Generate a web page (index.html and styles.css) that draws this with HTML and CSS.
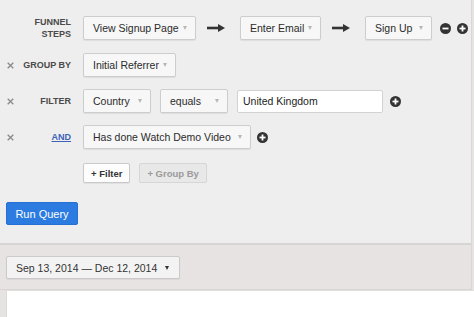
FILE: index.html
```html
<!DOCTYPE html>
<html>
<head>
<meta charset="utf-8">
<link rel="stylesheet" href="styles.css">
</head>
<body>
<div class="page">
  <section class="builder">
    <div class="row row-funnel">
      <div class="label"><span class="label-text">FUNNEL<br>STEPS</span></div>
      <div class="controls">
        <button class="select w-view">View Signup Page<span class="caret"></span></button>
        <svg class="arrow" width="18" height="8" viewBox="0 0 18 8"><rect x="0" y="2.7" width="12" height="2.6" fill="#333"/><path d="M11 0 L18 4 L11 8 Z" fill="#333"/></svg>
        <button class="select w-email">Enter Email<span class="caret"></span></button>
        <svg class="arrow" width="18" height="8" viewBox="0 0 18 8"><rect x="0" y="2.7" width="12" height="2.6" fill="#333"/><path d="M11 0 L18 4 L11 8 Z" fill="#333"/></svg>
        <button class="select w-signup">Sign Up<span class="caret"></span></button>
        <svg class="circle minus-btn" width="11" height="11" viewBox="0 0 11 11"><circle cx="5.5" cy="5.5" r="5.5" fill="#333"/><rect x="2.5" y="4.6" width="6" height="1.8" fill="#fff"/></svg>
        <svg class="circle plus-pair" width="11" height="11" viewBox="0 0 11 11"><circle cx="5.5" cy="5.5" r="5.5" fill="#333"/><rect x="2.5" y="4.6" width="6" height="1.8" fill="#fff"/><rect x="4.6" y="2.5" width="1.8" height="6" fill="#fff"/></svg>
      </div>
    </div>

    <div class="row">
      <div class="label"><svg class="remove" width="7" height="7" viewBox="0 0 7 7"><path d="M0.7 0.7 L6.3 6.3 M6.3 0.7 L0.7 6.3" stroke="#8a8a8a" stroke-width="1.3"/></svg><span class="label-text">GROUP BY</span></div>
      <div class="controls">
        <button class="select w-referrer">Initial Referrer<span class="caret"></span></button>
      </div>
    </div>

    <div class="row">
      <div class="label"><svg class="remove" width="7" height="7" viewBox="0 0 7 7"><path d="M0.7 0.7 L6.3 6.3 M6.3 0.7 L0.7 6.3" stroke="#8a8a8a" stroke-width="1.3"/></svg><span class="label-text">FILTER</span></div>
      <div class="controls gap">
        <button class="select w-68">Country<span class="caret"></span></button>
        <button class="select w-68">equals<span class="caret"></span></button>
        <div class="text-input">United Kingdom</div>
        <svg class="circle plus-after" width="11" height="11" viewBox="0 0 11 11"><circle cx="5.5" cy="5.5" r="5.5" fill="#333"/><rect x="2.5" y="4.6" width="6" height="1.8" fill="#fff"/><rect x="4.6" y="2.5" width="1.8" height="6" fill="#fff"/></svg>
      </div>
    </div>

    <div class="row">
      <div class="label"><svg class="remove" width="7" height="7" viewBox="0 0 7 7"><path d="M0.7 0.7 L6.3 6.3 M6.3 0.7 L0.7 6.3" stroke="#8a8a8a" stroke-width="1.3"/></svg><a class="label-text and-link" href="#">AND</a></div>
      <div class="controls">
        <button class="select w-demo">Has done Watch Demo Video<span class="caret"></span></button>
        <svg class="circle plus-after" width="11" height="11" viewBox="0 0 11 11"><circle cx="5.5" cy="5.5" r="5.5" fill="#333"/><rect x="2.5" y="4.6" width="6" height="1.8" fill="#fff"/><rect x="4.6" y="2.5" width="1.8" height="6" fill="#fff"/></svg>
      </div>
    </div>

    <div class="row">
      <div class="label"></div>
      <div class="controls gap">
        <button class="small-btn">+ Filter</button>
        <button class="small-btn disabled">+ Group By</button>
      </div>
    </div>

    <div class="run-wrap">
      <button class="run-btn">Run Query</button>
    </div>
  </section>

  <section class="toolbar">
    <button class="date-btn">Sep 13, 2014 — Dec 12, 2014<span class="caret dark"></span></button>
  </section>

  <section class="results"></section>
</div>
</body>
</html>
```

FILE: styles.css
```css
* { box-sizing: border-box; }
html, body { margin: 0; padding: 0; }
body {
  width: 474px;
  height: 317px;
  overflow: hidden;
  background: #e7e3e3;
  font-family: "Liberation Sans", Arial, Helvetica, sans-serif;
  color: #333;
}
.page { width: 474px; }

.builder {
  background: #efeeee;
  border-right: 1px solid #dad7d7;
  width: 472px;
  padding: 16px 0 18px 0;
  display: flex;
  flex-direction: column;
  gap: 12px;
  border-bottom: 2px solid #d7d4d4;
}
.row {
  display: flex;
  align-items: center;
  height: 24px;
}
.row-funnel { margin-bottom: 1px; }
.label {
  width: 71px;
  flex: none;
  display: flex;
  align-items: center;
  justify-content: space-between;
  padding-left: 7px;
  margin-right: 12px;
}
.label-text {
  margin-left: auto;
  font-size: 9px;
  font-weight: bold;
  line-height: 12px;
  color: #4a4a4a;
  text-align: right;
}
.and-link {
  color: #3a62b6;
  text-decoration: underline;
}
.remove { display: block; flex: none; }

.controls {
  display: flex;
  align-items: center;
}
.controls.gap { gap: 9px; }

.select {
  display: inline-flex;
  align-items: center;
  height: 24px;
  padding: 0 8px 0 9px;
  background: #f7f7f7;
  border: 1px solid #cdcdcd;
  border-radius: 2px;
  box-shadow: 0 1px 1px rgba(0,0,0,0.07);
  font-family: inherit;
  font-size: 10.5px;
  color: #2b2b2b;
  text-align: left;
  white-space: nowrap;
}
.caret {
  margin-left: auto;
  width: 0;
  height: 0;
  border-left: 2.5px solid transparent;
  border-right: 2.5px solid transparent;
  border-top: 4px solid #b8b8b8;
  flex: none;
}
.caret.dark { border-top-color: #333; margin-left: 8px; }
.w-view { width: 113px; }
.w-email { width: 81px; }
.w-signup { width: 67px; }
.w-referrer { width: 93px; }
.w-68 { width: 68px; }
.w-demo { width: 168px; }

.arrow { display: block; margin: 0 15px 0 11px; flex: none; }
.circle { display: block; flex: none; }
.minus-btn { margin-left: 8px; }
.plus-pair { margin-left: 6px; }
.plus-after { margin-left: 6px; }
.controls.gap .plus-after { margin-left: -2px; }

.text-input {
  width: 146px;
  height: 23px;
  display: flex;
  align-items: center;
  padding-left: 5px;
  background: #fff;
  border: 1px solid #d2d2d2;
  border-radius: 2px;
  font-size: 10.5px;
  color: #222;
}

.small-btn {
  height: 20px;
  padding: 0 7px;
  font-family: inherit;
  font-size: 9.5px;
  font-weight: bold;
  color: #333;
  background: #fdfdfd;
  border: 1px solid #c9c9c9;
  border-radius: 2px;
  box-shadow: 0 1px 1px rgba(0,0,0,0.06);
  white-space: nowrap;
}
.small-btn.disabled {
  color: #9a9a9a;
  background: #e9e8e8;
  border-color: #d6d6d6;
  box-shadow: none;
}

.run-wrap { padding: 5px 0 0 6px; }
.run-btn {
  width: 72px;
  height: 23px;
  background: #2c7be0;
  border: 1px solid #2670d4;
  border-radius: 2px;
  color: #fff;
  font-family: inherit;
  font-size: 11px;
  padding: 0;
}

.toolbar {
  width: 472px;
  border-right: 1px solid #dad7d7;
  padding: 11px 0 10px 6px;
  border-bottom: 1px solid #d9d5d5;
}
.date-btn {
  display: inline-flex;
  align-items: center;
  width: 174px;
  height: 23px;
  padding: 0 0 0 9px;
  background: #f4f3f3;
  border: 1px solid #cbc9c9;
  border-radius: 2px;
  box-shadow: 0 1px 1px rgba(0,0,0,0.06);
  font-family: inherit;
  font-size: 10.5px;
  color: #333;
}

.results {
  margin-left: 6px;
  height: 40px;
  background: #fff;
  border-left: 1px solid #dcd9d9;
  border-top: 1px solid #e2dfdf;
}
```
